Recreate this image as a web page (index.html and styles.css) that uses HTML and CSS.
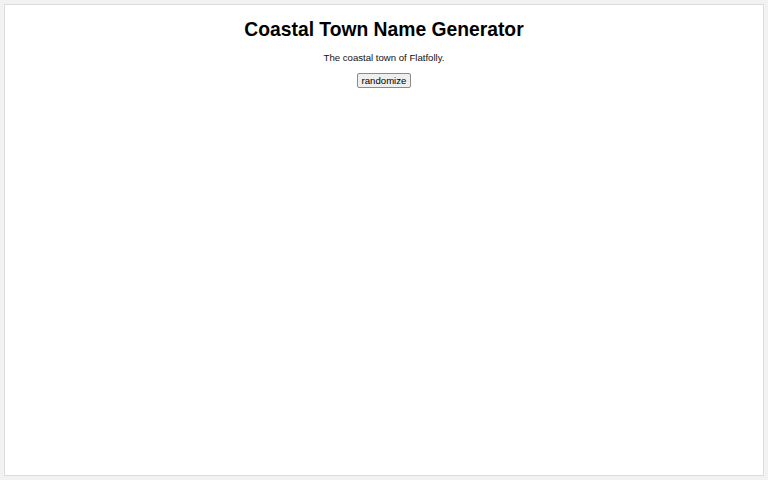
FILE: index.html
```html
<!DOCTYPE html>
<html>
<head>
  <title>Coastal Town Name Generator</title>
  <link rel="stylesheet" href="styles.css">
</head>
<body>
  <div class="frame">
    <h1>Coastal Town Name Generator</h1>
    <p class="town">The coastal town of Flatfolly.</p>
    <button class="randomize">randomize</button>
  </div>
</body>
</html>
```

FILE: styles.css
```css
body {
  margin: 0;
  padding: 4px;
  background: #f2f2f2;
  font-family: "Liberation Sans", Arial, sans-serif;
}

.frame {
  box-sizing: border-box;
  height: 472px;
  background: #fff;
  border: 1px solid #dcdcdc;
  display: flex;
  flex-direction: column;
  align-items: center;
}

h1 {
  margin: 14px 0 0;
  font-size: 19.3px;
  line-height: 22px;
  font-weight: bold;
  color: #000;
}

.town {
  margin: 11px 0 0;
  font-size: 9.6px;
  line-height: 11px;
  color: #111;
}

.randomize {
  margin-top: 10px;
  font-family: "Liberation Sans", Arial, sans-serif;
  font-size: 9.6px;
  line-height: 11px;
  padding: 1px 4px;
  color: #000;
  background: #efefef;
  border: 1px solid #8a8a8a;
  border-radius: 2px;
}
```
